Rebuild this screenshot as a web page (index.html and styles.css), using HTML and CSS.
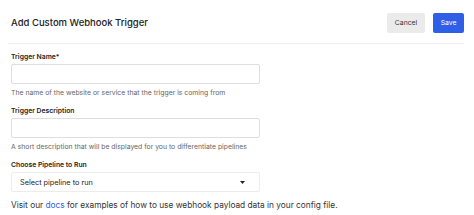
FILE: index.html
```html
<!DOCTYPE html>
<html lang="en">
<head>
    <meta charset="UTF-8">
    <title>Add Custom Webhook Trigger</title>
    <link rel="stylesheet" href="styles.css">
</head>
<body>
    <div class="panel">
        <header class="panel-header">
            <h1>Add Custom Webhook Trigger</h1>
            <div class="actions">
                <button class="btn btn-cancel">Cancel</button>
                <button class="btn btn-save">Save</button>
            </div>
        </header>

        <form class="trigger-form">
            <div class="field">
                <label for="trigger-name">Trigger Name*</label>
                <input type="text" id="trigger-name" class="text-input">
                <p class="hint">The name of the website or service that the trigger is coming from</p>
            </div>
            <div class="field">
                <label for="trigger-desc">Trigger Description</label>
                <input type="text" id="trigger-desc" class="text-input">
                <p class="hint">A short description that will be displayed for you to differentiate pipelines</p>
            </div>
            <div class="field">
                <label>Choose Pipeline to Run</label>
                <div class="select-box">
                    <span>Select pipeline to run</span>
                    <svg width="5" height="3" viewBox="0 0 5 3"><path d="M0 0 L5 0 L2.5 3 Z" fill="#222"/></svg>
                </div>
            </div>
            <p class="docs-note">Visit our <a href="#">docs</a> for examples of how to use webhook payload data in your config file.</p>
        </form>
    </div>
</body>
</html>
```

FILE: styles.css
```css
* {
    margin: 0;
    padding: 0;
    box-sizing: border-box;
}

body {
    font-family: "Inter", "Liberation Sans", sans-serif;
    background-color: #ffffff;
    color: #1f1f1f;
}

.panel {
    width: 464px;
    padding-left: 8px;
}

.panel-header {
    display: flex;
    align-items: center;
    justify-content: space-between;
    height: 44px;
    padding: 2px 0 0 3px;
    border-bottom: 1px solid #f0f0f0;
}

.panel-header h1 {
    font-size: 9.5px;
    font-weight: 500;
    line-height: 14px;
    color: #222;
}

.actions {
    display: flex;
    gap: 8px;
}

.btn {
    height: 20px;
    border: none;
    border-radius: 2px;
    font-family: inherit;
    font-size: 6.8px;
    cursor: pointer;
}

.btn-cancel {
    width: 38px;
    background-color: #ebebeb;
    color: #333;
}

.btn-save {
    width: 31px;
    background-color: #2f5fe6;
    color: #ffffff;
}

.trigger-form {
    padding: 8px 0 0 3px;
}

.field {
    margin-bottom: 8px;
}

.field label {
    display: block;
    font-size: 6.8px;
    font-weight: 600;
    line-height: 10px;
    color: #222;
    margin-bottom: 2px;
}

.text-input {
    display: block;
    width: 249px;
    height: 20px;
    border: 1px solid #dedede;
    border-radius: 2px;
    background: #fff;
}

.hint {
    font-size: 6.85px;
    line-height: 10px;
    color: #666;
    margin-top: 4px;
}

.select-box {
    display: flex;
    align-items: center;
    justify-content: space-between;
    width: 249px;
    height: 20px;
    padding: 0 14px 0 8px;
    border: 1px solid #ececec;
    border-radius: 2px;
    font-size: 7.3px;
    color: #222;
}

.docs-note {
    font-size: 8.3px;
    line-height: 10px;
    color: #333;
    margin-top: 0;
}

.docs-note a {
    color: #2f5fe6;
    text-decoration: none;
}
```
